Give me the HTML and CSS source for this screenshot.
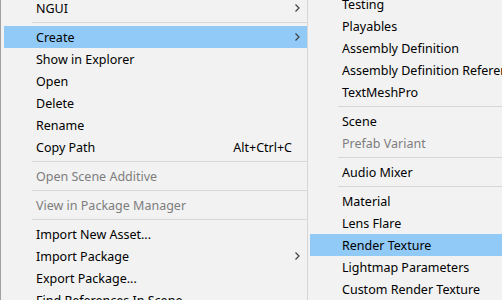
FILE: index.html
```html
<!DOCTYPE html>
<html lang="en">
<head>
  <meta charset="UTF-8">
  <title>Context Menu</title>
  <link rel="stylesheet" href="styles.css">
</head>
<body>
  <div class="menus">
    <ul class="menu main">
      <li class="item"><span class="label">NGUI</span><span class="arrow"><svg width="5" height="8" viewBox="0 0 5 8"><polyline points="0.5,0.5 4,4 0.5,7.5" fill="none" stroke="#404040" stroke-width="1.2"/></svg></span></li>
      <li class="sep"></li>
      <li class="item active"><span class="label">Create</span><span class="arrow"><svg width="5" height="8" viewBox="0 0 5 8"><polyline points="0.5,0.5 4,4 0.5,7.5" fill="none" stroke="#404040" stroke-width="1.2"/></svg></span></li>
      <li class="item"><span class="label">Show in Explorer</span></li>
      <li class="item"><span class="label">Open</span></li>
      <li class="item"><span class="label">Delete</span></li>
      <li class="item"><span class="label">Rename</span></li>
      <li class="item"><span class="label">Copy Path</span><span class="shortcut">Alt+Ctrl+C</span></li>
      <li class="sep"></li>
      <li class="item disabled"><span class="label">Open Scene Additive</span></li>
      <li class="sep"></li>
      <li class="item disabled"><span class="label">View in Package Manager</span></li>
      <li class="sep"></li>
      <li class="item"><span class="label">Import New Asset...</span></li>
      <li class="item"><span class="label">Import Package</span><span class="arrow"><svg width="5" height="8" viewBox="0 0 5 8"><polyline points="0.5,0.5 4,4 0.5,7.5" fill="none" stroke="#404040" stroke-width="1.2"/></svg></span></li>
      <li class="item"><span class="label">Export Package...</span></li>
      <li class="item"><span class="label">Find References In Scene</span></li>
    </ul>

    <ul class="menu sub">
      <li class="item"><span class="label">Testing</span></li>
      <li class="item"><span class="label">Playables</span></li>
      <li class="item"><span class="label">Assembly Definition</span></li>
      <li class="item"><span class="label">Assembly Definition Reference</span></li>
      <li class="item"><span class="label">TextMeshPro</span></li>
      <li class="sep"></li>
      <li class="item"><span class="label">Scene</span></li>
      <li class="item disabled"><span class="label">Prefab Variant</span></li>
      <li class="sep"></li>
      <li class="item"><span class="label">Audio Mixer</span></li>
      <li class="sep"></li>
      <li class="item"><span class="label">Material</span></li>
      <li class="item"><span class="label">Lens Flare</span></li>
      <li class="item active"><span class="label">Render Texture</span></li>
      <li class="item"><span class="label">Lightmap Parameters</span></li>
      <li class="item"><span class="label">Custom Render Texture</span></li>
    </ul>
  </div>
</body>
</html>
```

FILE: styles.css
```css
body {
  margin: 0;
  width: 502px;
  height: 300px;
  overflow: hidden;
  background-color: #f2f2f2;
  font-family: "Noto Sans", sans-serif;
  font-size: 12.5px;
  color: #000;
}
.menus {
  display: flex;
  align-items: flex-start;
}
.menu {
  list-style: none;
  margin: 0;
  padding: 0;
  background-color: #f2f2f2;
}
.main {
  width: 303px;
  flex: none;
  margin-top: -3px;
  padding-left: 3px;
  border-left: 1px solid #a0a0a0;
  border-right: 1px solid #d6d6d6;
}
.sub {
  flex: 1;
  margin-top: -7px;
  padding-left: 2px;
  white-space: nowrap;
  overflow: hidden;
}
.item {
  display: flex;
  align-items: center;
  height: 22px;
  padding-left: 32px;
}
.item.active {
  background-color: #91c9f7;
}
.item.disabled {
  color: #7d7d7d;
}
.label {
  flex: 1;
  white-space: nowrap;
}
.shortcut {
  padding-right: 15px;
}
.arrow {
  display: flex;
  padding-right: 7px;
}
.sep {
  height: 1px;
  margin: 3px 0 3px 28px;
  background-color: #d7d7d7;
}
```
